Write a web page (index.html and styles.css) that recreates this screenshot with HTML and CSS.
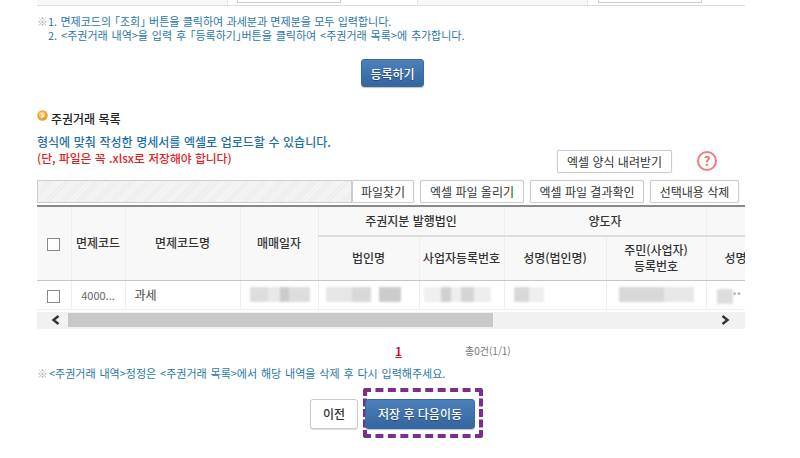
FILE: index.html
```html
<!DOCTYPE html>
<html lang="ko">
<head>
<meta charset="utf-8">
<title>주권거래 목록</title>
<link rel="stylesheet" href="styles.css">
</head>
<body>
<main class="page">
  <div class="top-row">
    <div class="tc tc-a"></div>
    <div class="tc tc-b"><span class="stub"></span></div>
    <div class="tc tc-c"></div>
    <div class="tc tc-d"><span class="stub"></span></div>
  </div>
  <div class="notes">
    <div class="note-line note-first"><span class="mark">※</span><span>1. 면제코드의 <span class="halt">「</span>조회<span class="halt">」</span> 버튼을 클릭하여 과세분과 면제분을 모두 입력합니다.</span></div>
    <div class="note-line note-indent">2. &lt;주권거래 내역&gt;을 입력 후 <span class="halt">「</span>등록하기<span class="halt">」</span>버튼을 클릭하여 &lt;주권거래 목록&gt;에 추가합니다.</div>
  </div>
  <div class="register-row"><button class="btn-blue btn-register">등록하기</button></div>
  <h2 class="section-title">
    <svg class="bullet" viewBox="0 0 11 11" width="11" height="11"><circle cx="5.5" cy="5.5" r="5.2" fill="#f0a028"/><circle cx="5" cy="4.6" r="3.2" fill="#ffc766"/><path d="M4.2 3.2 L6.6 5.5 L4.2 7.8" fill="none" stroke="#fff" stroke-width="1.4"/></svg>
    주권거래 목록
  </h2>
  <div class="upload-info">
    <div class="info-text">
      <p class="info-blue">형식에 맞춰 작성한 명세서를 엑셀로 업로드할 수 있습니다.</p>
      <p class="info-red">(단, 파일은 꼭 .xlsx로 저장해야 합니다)</p>
    </div>
    <div class="info-actions">
      <button class="btn-grey btn-template">엑셀 양식 내려받기</button>
      <span class="help">?</span>
    </div>
  </div>
  <div class="file-row">
    <div class="file-input"></div>
    <button class="btn-grey btn-find">파일찾기</button>
    <button class="btn-grey btn-up">엑셀 파일 올리기</button>
    <button class="btn-grey btn-result">엑셀 파일 결과확인</button>
    <button class="btn-grey btn-del">선택내용 삭제</button>
  </div>
  <div class="table-wrap">
    <table class="grid">
      <colgroup>
        <col class="c1"><col class="c2"><col class="c3"><col class="c4"><col class="c5"><col class="c6"><col class="c7"><col class="c8"><col class="c9">
      </colgroup>
      <thead>
        <tr>
          <th rowspan="2"><span class="check"></span></th>
          <th rowspan="2">면제코드</th>
          <th rowspan="2">면제코드명</th>
          <th rowspan="2">매매일자</th>
          <th colspan="2" class="h-top">주권지분 발행법인</th>
          <th colspan="2" class="h-top">양도자</th>
          <th class="h-top"></th>
        </tr>
        <tr>
          <th>법인명</th>
          <th>사업자등록번호</th>
          <th>성명(법인명)</th>
          <th>주민(사업자)<br>등록번호</th>
          <th class="clip">성명</th>
        </tr>
      </thead>
      <tbody>
        <tr>
          <td class="ctr"><span class="check"></span></td>
          <td class="ctr code">4000...</td>
          <td class="name">과세</td>
          <td><span class="blur blur-date"></span></td>
          <td><span class="blur blur-corp"></span></td>
          <td><span class="blur blur-biz"></span></td>
          <td><span class="blur blur-person"></span></td>
          <td><span class="blur blur-id"></span></td>
          <td class="last-cell"><span class="blur blur-last"></span><span class="stars">**</span></td>
        </tr>
      </tbody>
    </table>
    <div class="scrollbar">
      <svg class="arrow" viewBox="0 0 10 10" width="10" height="10"><path d="M7.5 1 L2.5 5 L7.5 9" fill="none" stroke="#333" stroke-width="2.4"/></svg>
      <div class="track"><div class="thumb"></div></div>
      <svg class="arrow" viewBox="0 0 10 10" width="10" height="10"><path d="M2.5 1 L7.5 5 L2.5 9" fill="none" stroke="#333" stroke-width="2.4"/></svg>
    </div>
  </div>
  <div class="pager">
    <a class="page-no">1</a>
    <span class="total">총0건(1/1)</span>
  </div>
  <p class="note-bottom"><span class="mark">※</span>&lt;주권거래 내역&gt;정정은 &lt;주권거래 목록&gt;에서 해당 내역을 삭제 후 다시 입력해주세요.</p>
  <div class="actions">
    <button class="btn-prev">이전</button>
    <div class="dash-box"><button class="btn-blue btn-next">저장 후 다음이동</button></div>
  </div>
</main>
</body>
</html>
```
FILE: styles.css
```css
* { box-sizing: border-box; }
html, body { margin: 0; padding: 0; background: #fff; overflow: hidden; }
body { width: 800px; height: 458px; font-family: "Noto Sans CJK KR", "Liberation Sans", sans-serif; font-size: 11px; color: #333; }
.page { width: 708px; margin-left: 37px; }
button { font-family: inherit; padding: 0; cursor: pointer; }

.top-row { display: flex; height: 6px; border-bottom: 1px solid #ddd; }
.tc { height: 5px; border-right: 1px solid #e6e6e6; }
.tc-a { width: 191px; background: #f8f8f8; }
.tc-b { width: 190px; padding-left: 9px; }
.tc-c { width: 170px; background: #f8f8f8; }
.tc-d { flex: 1; padding-left: 10px; border-right: 0; }
.stub { display: block; width: 104px; height: 3px; border: 1px solid #ccc; border-top: 0; background: #fff; }

.notes { margin-top: 8px; color: #1f78a8; font-size: 11px; line-height: 14px; }
.note-line { white-space: nowrap; }
.note-first { word-spacing: .25px; }
.note-indent { padding-left: 11px; word-spacing: .8px; }
.mark { display: inline-block; width: 11px; color: #aaa; }
.halt { font-feature-settings: "halt"; }

.register-row { display: flex; margin-top: 17px; padding-left: 324px; }
.btn-blue { color: #fff; border: 1px solid #3a6aa3; border-radius: 3px; background: linear-gradient(#4d80bb, #33659f); font-weight: 500; box-shadow: 0 1px 1px rgba(0,0,0,.25); text-shadow: 0 1px 1px rgba(0,0,0,.35); }
.btn-register { width: 63px; height: 28px; font-size: 12px; }

.section-title { margin: 23px 0 0; display: flex; align-items: center; height: 16px; font-size: 12px; font-weight: 500; color: #222; }
.bullet { flex: none; margin: -5px 3px 0 0; }

.upload-info { display: flex; justify-content: space-between; margin-top: 8px; height: 46px; }
.info-text p { margin: 0; font-weight: 500; line-height: 16px; white-space: nowrap; }
.info-blue { color: #1c6ea4; font-size: 12px; word-spacing: .25px; }
.info-red { color: #e01e24; font-size: 11.8px; }
.info-actions { display: flex; align-items: flex-start; padding-top: 16px; margin-right: 28px; }
.btn-grey { height: 23px; font-size: 12px; color: #333; background: #fff; border: 1px solid #ccc; border-radius: 2px; box-shadow: 0 0 1px #ccc; white-space: nowrap; }
.btn-template { width: 115px; }
.help { width: 20px; height: 20px; margin-left: 25px; margin-top: 1px; border: 2px solid #ef7c7c; border-radius: 50%; color: #ef6a6a; font-size: 13px; font-weight: 700; text-align: center; line-height: 16px; }

.file-row { display: flex; align-items: stretch; height: 23px; padding-right: 6px; }
.file-input { width: 315px; border: 1px solid #ccc; background: repeating-linear-gradient(135deg, #f6f6f6 0 1px, #ececec 1px 2px); }
.btn-find { width: 62px; }
.btn-up { width: 104px; margin-left: 6px; }
.btn-result { width: 114px; margin-left: 6px; }
.btn-del { width: 89px; margin-left: 6px; }

.table-wrap { margin-top: 2px; width: 708px; border-top: 2px solid #888; overflow: hidden; }
.grid { width: 708px; border-collapse: collapse; table-layout: fixed; font-size: 12px; }
.c1 { width: 34px; }
.c2 { width: 54px; }
.c3 { width: 115px; }
.c4 { width: 78px; }
.c5 { width: 101px; }
.c6 { width: 85px; }
.c7 { width: 102px; }
.c8 { width: 100px; }
.c9 { width: 39px; }
.grid th { background: #f8f8f8; font-weight: 500; color: #333; border: 1px solid #eee; border-top: 0; border-bottom: 1px solid #c4c4c4; text-align: center; line-height: 16px; padding: 0; white-space: nowrap; overflow: hidden; }
.grid th:first-child, .grid td:first-child { border-left: 0; }
.grid thead tr:first-child th { height: 29px; }
.grid thead tr:nth-child(2) th { height: 44px; }
.h-top { border-bottom: 2px solid #ddd !important; }
.clip { text-align: left !important; padding-left: 18px !important; }
.grid td { height: 29px; padding: 0; border: 1px solid #eee; border-top: 0; font-size: 12px; color: #444; overflow: hidden; white-space: nowrap; }
.ctr { text-align: center; }
.grid .code { color: #666; font-size: 11px; }
.grid .name { padding-left: 9px; }
.check { display: inline-block; width: 13px; height: 13px; border: 1px solid #888; background: #fff; vertical-align: middle; }

.blur { display: block; height: 15px; filter: blur(1px); }
.blur-date { width: 60px; margin-left: 9px; background: linear-gradient(90deg, #ddd 0 30%, #e8e8e8 30% 50%, #ccc 50% 65%, #ddd 65% 100%); }
.blur-corp { width: 75px; margin-left: 7px; background: linear-gradient(90deg, #e6e6e6 0 35%, #d8d8d8 35% 60%, #fff 60% 71%, #ccc 71% 100%); }
.blur-biz { width: 67px; margin-left: 4px; background: linear-gradient(90deg, #f0f0f0 0 25%, #d0d0d0 25% 40%, #eee 40% 55%, #d5d5d5 55% 75%, #eee 75% 100%); }
.blur-person { width: 30px; margin-left: 9px; background: linear-gradient(90deg, #d8d8d8 0 50%, #eee 50% 100%); }
.blur-id { width: 75px; margin-left: 12px; background: linear-gradient(90deg, #d8d8d8 0 60%, #e8e8e8 60% 100%); }
.last-cell .blur-last { display: inline-block; vertical-align: middle; width: 16px; margin-left: 10px; background: #ddd; }
.stars { font-size: 9px; color: #999; vertical-align: middle; }

.scrollbar { display: flex; align-items: center; height: 17px; margin-top: 2px; background: #f1f1f1; }
.arrow { flex: none; margin: 0 7px 0 14px; }
.arrow:last-child { margin: 0 15px 0 14px; }
.track { flex: 1; height: 14px; }
.thumb { width: 425px; height: 100%; background: #c8c8c8; }

.pager { position: relative; display: flex; justify-content: center; height: 16px; margin-top: 14px; }
.page-no { margin-left: 15px; color: #c8102e; font-weight: 700; font-size: 11px; text-decoration: underline; line-height: 16px; }
.total { position: absolute; left: 428px; font-size: 10px; color: #777; line-height: 16px; }
.note-bottom { margin: 6px 0 0; color: #1f78a8; font-size: 11px; line-height: 16px; white-space: nowrap; word-spacing: .8px; }
.note-bottom .mark { width: 12px; }

.actions { display: flex; align-items: flex-start; margin-top: 7px; padding-left: 273px; }
.btn-prev { width: 48px; height: 30px; margin-top: 11px; margin-right: 5px; background: #fff; border: 1px solid #ccc; border-radius: 3px; font-size: 12px; font-weight: 500; color: #333; box-shadow: 0 1px 1px rgba(0,0,0,.15); }
.dash-box { width: 120px; height: 50px; padding-top: 7px; border: 4px dashed #7b2d91; border-radius: 3px; }
.btn-next { display: block; width: 110px; height: 30px; font-size: 12px; margin-left: -2px; }
```
